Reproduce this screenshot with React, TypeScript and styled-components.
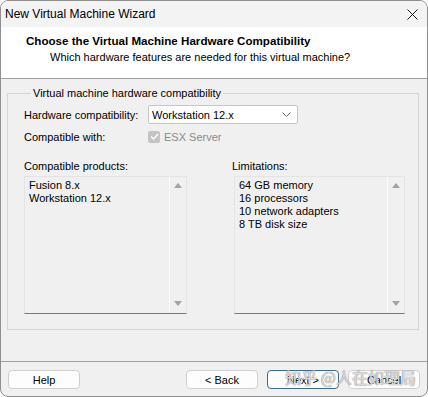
import styled, { createGlobalStyle } from "styled-components";

const Global = createGlobalStyle`
  html, body {
    margin: 0;
    padding: 0;
    background: #fff;
  }
  * {
    box-sizing: border-box;
  }
`;

const Window = styled.div`
  position: relative;
  width: 428px;
  height: 397px;
  border: 1px solid #8f8f8f;
  border-radius: 8px;
  overflow: hidden;
  display: flex;
  flex-direction: column;
  background: #f0f0f0;
  font-family: "Liberation Sans", Arial, sans-serif;
  font-size: 11px;
  color: #000;
  white-space: nowrap;
`;

const TitleBar = styled.div`
  height: 26px;
  flex: none;
  display: flex;
  align-items: center;
  justify-content: space-between;
  padding: 0 9px 0 4px;
  background: #f3f3f3;
  font-size: 12px;
`;

const Header = styled.div`
  height: 52px;
  flex: none;
  background: #fff;
  border-bottom: 1px solid #a0a0a0;
  padding: 6px 0 0 25px;
  line-height: 16px;
`;

const HeadTitle = styled.div`
  font-weight: bold;
  font-size: 11.6px;
`;

const HeadSub = styled.div`
  padding-left: 24px;
`;

const Body = styled.div`
  flex: 1;
  padding: 7px 8px 0 6px;
  display: flex;
  flex-direction: column;
`;

const Group = styled.fieldset`
  margin: 0;
  padding: 0 15px 15px 16px;
  border: 1px solid #d5d5d5;
  min-width: 0;
`;

const Legend = styled.legend`
  margin-left: 7px;
  padding: 0 2px;
  line-height: 14px;
`;

const Form = styled.div`
  display: grid;
  grid-template-columns: 124px 150px;
  grid-auto-rows: 19px;
  row-gap: 3px;
  align-items: center;
  margin-top: 5px;
`;

const Select = styled.div`
  height: 19px;
  background: #fff;
  border: 1px solid #c6c6c6;
  border-radius: 2px;
  display: flex;
  align-items: center;
  justify-content: space-between;
  padding: 0 6px 0 3px;
`;

const CheckRow = styled.div`
  display: flex;
  align-items: center;
  gap: 4px;
  color: #8a8a8a;
  height: 19px;
`;

const Box = styled.span`
  width: 12px;
  height: 12px;
  border-radius: 2px;
  background: #c4c4c4;
  display: flex;
  align-items: center;
  justify-content: center;
`;

const Columns = styled.div`
  display: grid;
  grid-template-columns: 208px 173px;
  margin-top: 13px;
`;

const Column = styled.div`
  display: flex;
  flex-direction: column;
`;

const ColLabel = styled.div`
  line-height: 14px;
  margin-bottom: 3px;
`;

const List = styled.div<{ $w: number; $indent: number }>`
  width: ${(p) => p.$w}px;
  margin-left: ${(p) => p.$indent}px;
  height: 138px;
  border: 1px solid #e4e4e4;
  border-bottom: 1px solid #7a7a7a;
  display: flex;
`;

const Items = styled.div`
  flex: 1;
  padding: 2px 0 0 4px;
  line-height: 13px;
`;

const Scroll = styled.div`
  width: 17px;
  border-left: 1px solid #fbfbfb;
  display: flex;
  flex-direction: column;
  justify-content: space-between;
  align-items: center;
  padding: 6px 0 7px;
`;

const Footer = styled.div`
  height: 35px;
  flex: none;
  border-top: 1px solid #a0a0a0;
  display: flex;
  align-items: center;
  padding: 1px 7px 0 7px;
  gap: 9px;
`;

const Button = styled.div<{ $def?: boolean }>`
  width: 72px;
  height: 19px;
  border-radius: 4px;
  background: #fdfdfd;
  border: 1px solid ${(p) => (p.$def ? "#3a6f8f" : "#d0d0d0")};
  display: flex;
  align-items: center;
  justify-content: center;
`;

const Spacer = styled.div`
  flex: 1;
`;

const Watermark = styled.div`
  position: absolute;
  right: 11px;
  bottom: 7px;
  font-family: "Noto Sans CJK SC", sans-serif;
  font-size: 16px;
  color: rgba(255, 255, 255, 0.7);
  text-shadow: 0 0 1px #888, 0 0 1px #888;
  pointer-events: none;
`;

const Arrow = ({ up }: { up?: boolean }) => (
  <svg width="8" height="5" viewBox="0 0 8 5">
    <path d={up ? "M0 5 L4 0 L8 5 Z" : "M0 0 L4 5 L8 0 Z"} fill="#a3a3a3" />
  </svg>
);

const products = ["Fusion 8.x", "Workstation 12.x"];
const limits = ["64 GB memory", "16 processors", "10 network adapters", "8 TB disk size"];

export default function App() {
  return (
    <>
      <Global />
      <Window>
        <TitleBar>
          <span>New Virtual Machine Wizard</span>
          <svg width="11" height="11" viewBox="0 0 11 11">
            <path d="M0.5 0.5 L10.5 10.5 M10.5 0.5 L0.5 10.5" stroke="#1a1a1a" strokeWidth="1" />
          </svg>
        </TitleBar>
        <Header>
          <HeadTitle>Choose the Virtual Machine Hardware Compatibility</HeadTitle>
          <HeadSub>Which hardware features are needed for this virtual machine?</HeadSub>
        </Header>
        <Body>
          <Group>
            <Legend>Virtual machine hardware compatibility</Legend>
            <Form>
              <span>Hardware compatibility:</span>
              <Select>
                <span>Workstation 12.x</span>
                <svg width="9" height="5" viewBox="0 0 9 5">
                  <path d="M0.5 0.5 L4.5 4.5 L8.5 0.5" stroke="#707070" fill="none" strokeWidth="1" />
                </svg>
              </Select>
              <span>Compatible with:</span>
              <CheckRow>
                <Box>
                  <svg width="9" height="7" viewBox="0 0 9 7">
                    <path d="M1 3.5 L3.5 6 L8 1" stroke="#fff" fill="none" strokeWidth="1.4" />
                  </svg>
                </Box>
                <span>ESX Server</span>
              </CheckRow>
            </Form>
            <Columns>
              <Column>
                <ColLabel>Compatible products:</ColLabel>
                <List $w={163} $indent={0}>
                  <Items>
                    {products.map((p) => (
                      <div key={p}>{p}</div>
                    ))}
                  </Items>
                  <Scroll>
                    <Arrow up />
                    <Arrow />
                  </Scroll>
                </List>
              </Column>
              <Column>
                <ColLabel>Limitations:</ColLabel>
                <List $w={171} $indent={2}>
                  <Items>
                    {limits.map((p) => (
                      <div key={p}>{p}</div>
                    ))}
                  </Items>
                  <Scroll>
                    <Arrow up />
                    <Arrow />
                  </Scroll>
                </List>
              </Column>
            </Columns>
          </Group>
        </Body>
        <Footer>
          <Button>Help</Button>
          <Spacer />
          <Button>&lt; Back</Button>
          <Button $def>Next &gt;</Button>
          <Button>Cancel</Button>
        </Footer>
        <Watermark>知乎 @人在如理局</Watermark>
      </Window>
    </>
  );
}
